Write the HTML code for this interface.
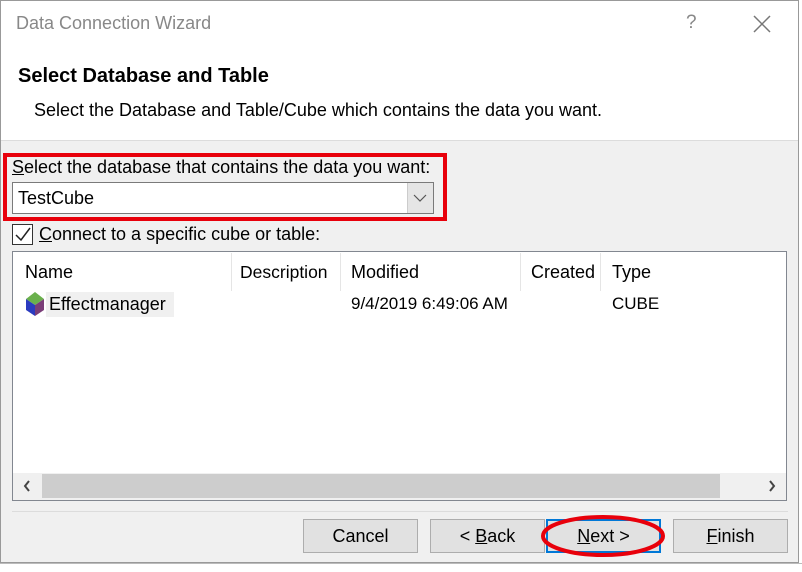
<!DOCTYPE html>
<html><head><style>
*{margin:0;padding:0;box-sizing:border-box}
body{width:802px;height:572px;background:#fff;position:relative;overflow:hidden;font-family:"Liberation Sans",sans-serif;font-size:18px;color:#000}
.a{position:absolute;line-height:1.1}
.btn{position:absolute;top:519px;height:34px;background:#e1e1e1;border:1px solid #adadad;text-align:center;line-height:32px;font-size:18px}
u{text-decoration:underline}
</style></head><body>
<div class="a" style="left:0;top:0;width:799px;height:563px;background:#f0f0f0;border:1px solid #999"></div>
<div class="a" style="left:1px;top:1px;width:797px;height:140px;background:#fff;border-bottom:1px solid #dcdcdc"></div>
<div class="a" style="left:16px;top:14px;color:#888;font-size:18px">Data Connection Wizard</div>
<div class="a" style="left:686px;top:13px;color:#888;font-size:19px">?</div>
<svg class="a" style="left:752px;top:14px" width="20" height="20"><path d="M2 2L18 18M18 2L2 18" stroke="#777" stroke-width="1.5"/></svg>
<div class="a" style="left:18px;top:65px;font-weight:bold;font-size:20px">Select Database and Table</div>
<div class="a" style="left:34px;top:101px;font-size:18px">Select the Database and Table/Cube which contains the data you want.</div>
<div class="a" style="left:12px;top:158px;font-size:18px"><u>S</u>elect the database that contains the data you want:</div>
<div class="a" style="left:12px;top:182px;width:422px;height:32px;background:#fff;border:1px solid #7a7a7a"></div>
<div class="a" style="left:18px;top:189px;font-size:18px">TestCube</div>
<div class="a" style="left:407px;top:183px;width:26px;height:30px;background:#e5e5e5;border-left:1px solid #ccc"></div>
<svg class="a" style="left:413px;top:193px" width="14" height="10"><path d="M1 2L7 8L13 2" stroke="#555" fill="none" stroke-width="1.2"/></svg>
<div class="a" style="left:3px;top:153px;width:444px;height:68px;border:4px solid #e8000b"></div>
<div class="a" style="left:12px;top:224px;width:21px;height:21px;background:#fff;border:1px solid #333"></div>
<svg class="a" style="left:12px;top:224px" width="21" height="21"><path d="M4 11L9 16L18 4" stroke="#222" fill="none" stroke-width="1.5"/></svg>
<div class="a" style="left:39px;top:225px;font-size:18px"><u>C</u>onnect to a specific cube or table:</div>
<div class="a" style="left:12px;top:251px;width:775px;height:250px;background:#fff;border:1px solid #828790"></div>
<div class="a" style="left:231px;top:253px;width:1px;height:38px;background:#e5e5e5"></div>
<div class="a" style="left:340px;top:253px;width:1px;height:38px;background:#e5e5e5"></div>
<div class="a" style="left:520px;top:253px;width:1px;height:38px;background:#e5e5e5"></div>
<div class="a" style="left:600px;top:253px;width:1px;height:38px;background:#e5e5e5"></div>
<div class="a" style="left:25px;top:263px">Name</div>
<div class="a" style="left:240px;top:263px;font-size:17.5px">Description</div>
<div class="a" style="left:351px;top:263px">Modified</div>
<div class="a" style="left:531px;top:263px">Created</div>
<div class="a" style="left:612px;top:263px">Type</div>
<svg class="a" style="left:25px;top:291px" width="20" height="26"><path d="M10 1L19 8L10 14L1 8Z" fill="#6ab04c"/><path d="M1 8L10 14V25L1 19Z" fill="#2b3bbf"/><path d="M19 8L10 14V25L19 19Z" fill="#7a3d78"/></svg>
<div class="a" style="left:46px;top:292px;width:128px;height:25px;background:#f0f0f0"></div>
<div class="a" style="left:49px;top:295px">Effectmanager</div>
<div class="a" style="left:351px;top:295px;font-size:17px">9/4/2019 6:49:06 AM</div>
<div class="a" style="left:612px;top:295px;font-size:17px">CUBE</div>
<div class="a" style="left:13px;top:473px;width:773px;height:27px;background:#f0f0f0"></div>
<div class="a" style="left:42px;top:474px;width:678px;height:24px;background:#cdcdcd"></div>
<svg class="a" style="left:22px;top:479px" width="10" height="14"><path d="M7 2L3 7L7 12" stroke="#444" fill="none" stroke-width="2"/></svg>
<svg class="a" style="left:767px;top:479px" width="10" height="14"><path d="M3 2L7 7L3 12" stroke="#444" fill="none" stroke-width="2"/></svg>
<div class="a" style="left:12px;top:511px;width:776px;height:1px;background:#dcdcdc"></div>
<div class="btn" style="left:303px;width:115px">Cancel</div>
<div class="btn" style="left:430px;width:115px">&lt; <u>B</u>ack</div>
<div class="btn" style="left:546px;width:115px;border:2px solid #0078d7;line-height:30px"><u>N</u>ext &gt;</div>
<div class="btn" style="left:673px;width:115px"><u>F</u>inish</div>
<svg class="a" style="left:540px;top:512px" width="128" height="50"><ellipse cx="63" cy="24" rx="60" ry="19" fill="none" stroke="#e8000b" stroke-width="4"/></svg>
<div class="a" style="left:0;top:563px;width:802px;height:1px;background:#bbb"></div>
</body></html>
